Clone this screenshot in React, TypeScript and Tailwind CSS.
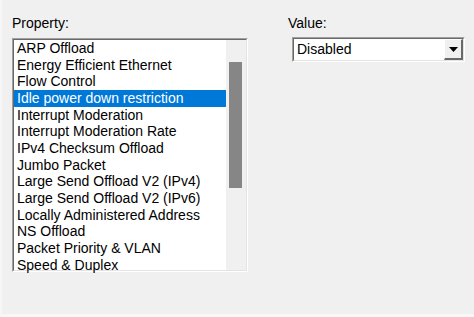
import React from 'react';

// Advanced adapter properties pane (Property list + Value combo)

const properties = [
  'ARP Offload',
  'Energy Efficient Ethernet',
  'Flow Control',
  'Idle power down restriction',
  'Interrupt Moderation',
  'Interrupt Moderation Rate',
  'IPv4 Checksum Offload',
  'Jumbo Packet',
  'Large Send Offload V2 (IPv4)',
  'Large Send Offload V2 (IPv6)',
  'Locally Administered Address',
  'NS Offload',
  'Packet Priority & VLAN',
  'Speed & Duplex',
];

const SELECTED = 3;

export default function App() {
  return (
    <div
      className="w-[474px] h-[317px] bg-[#f0f0f0] text-[14px] text-black overflow-hidden flex pl-[10px] pt-[14px] border-l-2 border-l-[#f6f6f6] border-b-[3px] border-b-[#f7f7f7]"
      style={{ fontFamily: '"Liberation Sans", Arial, sans-serif' }}
    >
      {/* Property column */}
      <div className="w-[236px] flex flex-col">
        <div className="h-[24px] leading-[18px]">Property:</div>
        <div className="h-[234px] flex border-t border-l border-t-[#a0a0a0] border-l-[#a0a0a0] border-b border-r border-b-[#ffffff] border-r-[#ffffff]">
          <div className="flex-1 flex border-t border-l border-t-[#696969] border-l-[#696969] border-b border-r border-b-[#e3e3e3] border-r-[#e3e3e3]">
            <div className="w-[212px] bg-white flex flex-col">
              {properties.map((p, i) => (
                <div
                  key={p}
                  className={`h-[16.67px] leading-[16.67px] pl-[3px] whitespace-nowrap ${
                    i === SELECTED ? 'bg-[#0078d7] text-white' : ''
                  }`}
                >
                  {p}
                </div>
              ))}
            </div>
            <div className="flex-1 bg-[#f0f0f0] pt-[22px] pl-[3px]">
              <div className="w-[13px] h-[126px] bg-[#868686]" />
            </div>
          </div>
        </div>
      </div>

      {/* Value column */}
      <div className="ml-[40px] flex flex-col">
        <div className="h-[23px] leading-[18px]">Value:</div>
        <div className="ml-[4px] w-[173px] h-[25px] flex border-t border-l border-t-[#a0a0a0] border-l-[#a0a0a0] border-b border-r border-b-white border-r-white">
          <div className="flex-1 flex border-t border-l border-t-[#696969] border-l-[#696969] border-b border-r border-b-[#e3e3e3] border-r-[#e3e3e3] bg-white">
            <div className="flex-1 pl-[3px] leading-[21px]">Disabled</div>
            <div className="w-[19px] bg-[#f0f0f0] flex items-center justify-center border-t border-l border-t-white border-l-white border-b-2 border-r-2 border-b-[#696969] border-r-[#696969]">
              <svg width="9" height="5" viewBox="0 0 9 5">
                <path d="M0 0h9L4.5 5z" fill="#000" />
              </svg>
            </div>
          </div>
        </div>
      </div>
    </div>
  );
}
